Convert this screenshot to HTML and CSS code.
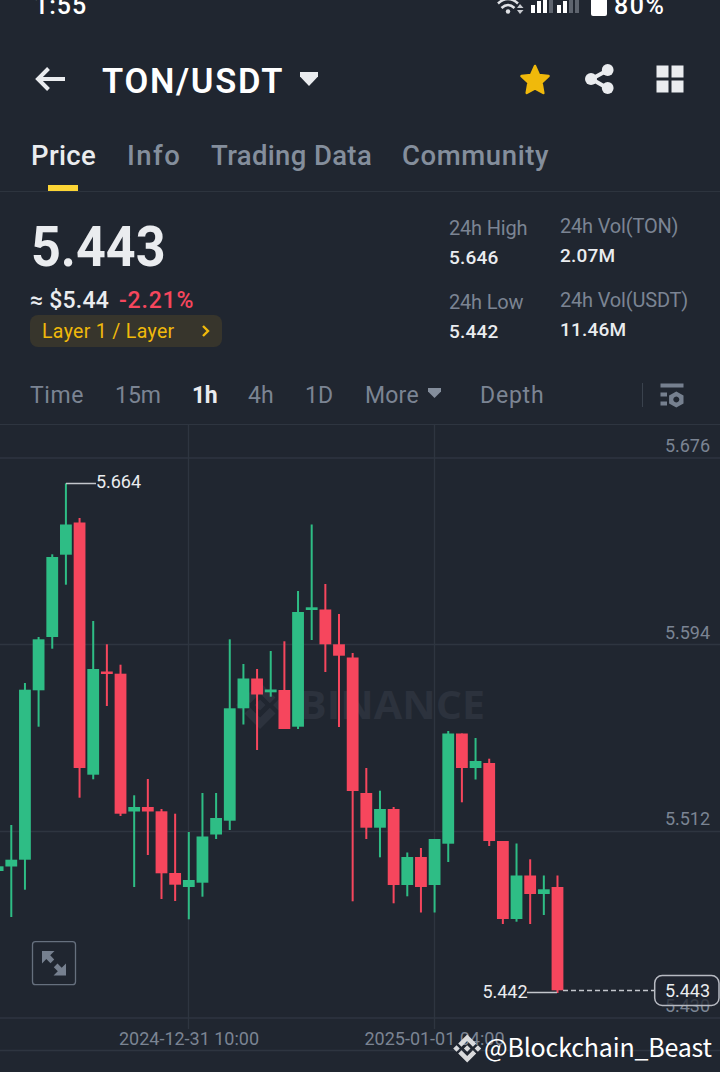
FILE: index.html
```html
<!DOCTYPE html>
<html lang="en">
<head>
<meta charset="utf-8">
<title>TON/USDT</title>
<link rel="stylesheet" href="styles.css">
</head>
<body>
<div class="status">
  <span class="clock">1:55</span>
  <svg class="status-icons" width="110" height="20" viewBox="0 0 110 20">
    <g fill="none" stroke="#dfe1e5" stroke-width="2.6">
      <path d="M1 3.5Q11-5.5 21 3.5"/><path d="M4.500 8Q11 2 17.500 8"/>
    </g>
    <circle cx="11" cy="11.500" r="2.200" fill="#dfe1e5"/>
    <path d="M20 8l3-4 3.500 4zM20 10l3 4 3.500-4z" fill="#c9ccd1"/>
    <path fill="#fff" d="M34 5h4v8h-4zM40 1h4v12h-4zM46 0h4v13h-4zM60 5h4v8h-4zM66 1h4v12h-4z"/>
    <path fill="#5e646e" d="M52 0h4v13h-4zM72 0h4v13h-4zM78 0h4v13h-4z"/>
    <path fill="#fff" d="M94 0h16v14q0 2-2 2H96q-2 0-2-2z"/>
  </svg>
  <span class="battery">80%</span>
</div>

<header class="header">
  <svg class="back" width="32" height="26" viewBox="0 0 32 26"><path d="M31 13H4M14.500 2.500L4 13l10.500 10.500" fill="none" stroke="#eaecef" stroke-width="4"/></svg>
  <h1 class="pair">TON/USDT</h1>
  <svg class="pair-caret" width="18" height="14" viewBox="0 0 18 14"><path d="M0 0h18v4.500L9 14 0 4.500z" fill="#eaecef"/></svg>
  <svg class="star" width="30" height="31" viewBox="0 0 30 31"><path d="M15 2l4 9 9.500 1-7 6.500 1.800 10.500L15 24.300 6.700 29l1.800-10.500-7-6.500 9.500-1z" fill="#f0b90b" stroke="#f0b90b" stroke-width="2.500" stroke-linejoin="round"/></svg>
  <svg class="share" width="30" height="30" viewBox="0 0 30 30"><path d="M23 6L6.500 15 23 24.500" fill="none" stroke="#eaecef" stroke-width="4"/><g fill="#eaecef"><circle cx="22.700" cy="6" r="5.900"/><circle cx="6" cy="15" r="6"/><circle cx="22.700" cy="24" r="5.900"/></g></svg>
  <svg class="grid-icon" width="28" height="28" viewBox="0 0 28 28"><path d="M.500.500h12v12h-12zM15.500.500h12v12h-12zM.500 15.500h12v12h-12zM15.500 15.500h12v12h-12z" fill="#eaecef"/></svg>
</header>

<nav class="tabs">
  <span class="tab tab-price active">Price</span>
  <span class="tab tab-info">Info</span>
  <span class="tab tab-trading">Trading Data</span>
  <span class="tab tab-community">Community</span>
</nav>

<section class="summary">
  <div class="quote">
    <div class="last">5.443</div>
    <div class="fiat"><span class="usd">≈ $5.44</span><span class="change">-2.21%</span></div>
    <div class="tag"><span>Layer 1 / Layer</span><svg width="8" height="12" viewBox="0 0 8 12"><path d="M1 1l5 5-5 5" fill="none" stroke="#f0b90b" stroke-width="2.400"/></svg></div>
  </div>
  <dl class="stats stats-range">
    <dt>24h High</dt><dd>5.646</dd>
    <dt class="low">24h Low</dt><dd>5.442</dd>
  </dl>
  <dl class="stats stats-volume">
    <dt>24h Vol(TON)</dt><dd>2.07M</dd>
    <dt>24h Vol(USDT)</dt><dd>11.46M</dd>
  </dl>
</section>

<nav class="frames">
  <span class="frame f-time">Time</span>
  <span class="frame f-15m">15m</span>
  <span class="frame f-1h active">1h</span>
  <span class="frame f-4h">4h</span>
  <span class="frame f-1d">1D</span>
  <span class="frame f-more">More</span>
  <svg class="more-caret" width="13" height="10" viewBox="0 0 13 10"><path d="M0 0h13v3.500L6.500 10 0 3.500z" fill="#848e9c"/></svg>
  <span class="frame f-depth">Depth</span>
  <i class="divider"></i>
  <svg class="settings" width="24" height="25" viewBox="0 0 24 25"><path fill="#76808f" fill-rule="evenodd" d="M.500.500h23v4H.500zM.500 9.500h6.500v4H.500zM.500 18.500h6.500v4H.500zM16.300 8.500l7.200 4v8l-7.200 4-7.200-4v-8zM16.300 13.500a3 3 0 1 0 .01 0z"/></svg>
</nav>

<main class="chart">
  <svg class="plot" width="720" height="648" viewBox="0 424 720 648">
    <g class="grid">
      <path class="rule-wide" d="M0 424H720"/>
      <path d="M0 458H720M0 644.500H720M0 831.500H720M0 1018H720M0 1050.500H720M188.500 425V1029M434.500 425V1029"/>
    </g>
    <g class="brand">
      <path d="M236 705l5.500-5.500 5.500 5.500-5.500 5.500zM254.500 705l5.500-5.500 5.500 5.500-5.500 5.500zM273 705l5.500-5.500 5.500 5.500-5.500 5.500zM244.500 697.500L260 682l15.500 15.500-5.700 5.700-9.800-9.800-9.800 9.800zM244.500 713.500l5.700-5.700 9.800 9.800 9.800-9.800 5.700 5.700L260 729z"/>
      <text x="299" y="719" textLength="186" lengthAdjust="spacingAndGlyphs">BINANCE</text>
    </g>
    <g id="candles"></g>
    <g class="marker">
      <path d="M66 483.500H96M527 992.500H557"/>
      <path d="M563 990.500H655" stroke-dasharray="5 3"/>
      <text x="96" y="488" textLength="45">5.664</text>
      <text x="482.500" y="998" textLength="45">5.442</text>
    </g>
    <g class="axis">
      <text x="665" y="452" textLength="45">5.676</text>
      <text x="665" y="639" textLength="45">5.594</text>
      <text x="665" y="825" textLength="45">5.512</text>
      <text x="665" y="1012" textLength="45">5.430</text>
      <text x="119" y="1045" textLength="140">2024-12-31 10:00</text>
      <text x="364.500" y="1045" textLength="140">2025-01-01 04:00</text>
    </g>
    <g class="current">
      <rect x="654.700" y="975.500" width="64.300" height="30" rx="7.500"/>
      <text x="665" y="997" textLength="45">5.443</text>
    </g>
    <g class="expand">
      <rect x="32.500" y="941.700" width="43" height="43" rx="3"/>
      <path d="M42 951h12.500l-4.300 4.200 4 4.300-3.700 3.700-4.200-4.200L42 963.500zM66 975.500H53.500l4.300-4.200-4-4 3.700-3.700 4.200 4.200 4.300-4.300z"/>
    </g>
    <g class="credit">
      <path d="M467.200 1034.500l9 9-3.300 3.300-5.700-5.700-5.700 5.700-3.300-3.300zM467.200 1062.500l9-9-3.300-3.300-5.700 5.700-5.700-5.700-3.300 3.300zM453.200 1048.500l3.300-3.300 3.300 3.300-3.300 3.300zM463.900 1048.500l3.300-3.300 3.300 3.300-3.300 3.300zM474.600 1048.500l3.300-3.300 3.300 3.300-3.300 3.300z"/>
      <text x="484" y="1057" textLength="228">@Blockchain_Beast</text>
    </g>
  </svg>
</main>
<script src="chart.js"></script>
</body>
</html>
```
FILE: styles.css
```css
* { box-sizing: border-box; }
body {
  margin: 0;
  width: 720px;
  height: 1072px;
  overflow: hidden;
  background: #202630;
  color: #eaecef;
  font-family: Roboto, "Liberation Sans", sans-serif;
}
svg { display: block; flex: none; }
span { white-space: nowrap; }

.status {
  display: flex;
  align-items: flex-start;
  height: 26px;
  padding-left: 34px;
  color: #fff;
  font-size: 25px;
  font-weight: 500;
  line-height: 12px;
}
.clock { width: 463px; letter-spacing: 1px; }
.status-icons { margin-right: 7px; }
.battery { letter-spacing: 1.500px; }

.header {
  display: flex;
  align-items: center;
  height: 106px;
  padding-left: 34px;
}
.pair {
  width: 183px;
  margin: 4px 15px 0 36px;
  color: #fff;
  font-size: 34.500px;
  font-weight: 600;
  line-height: 40px;
  letter-spacing: 1.700px;
  white-space: nowrap;
}
.pair-caret { margin-right: 202px; }
.star { margin-right: 35px; }
.share { margin-right: 41px; }

.tabs {
  display: flex;
  height: 60px;
  padding-left: 31px;
  border-bottom: 1px solid #2d343e;
  color: #848e9c;
  font-size: 27.500px;
  font-weight: 500;
  line-height: 47px;
}
.tab { position: relative; letter-spacing: .35px; }
.tab-price { width: 96px; }
.tab-info { width: 84px; letter-spacing: 1.500px; }
.tab-trading { width: 191px; }
.tab-community { letter-spacing: .6px; }
.tabs .active { color: #eaecef; }
.tabs .active::after {
  content: "";
  position: absolute;
  left: 17px;
  bottom: 0;
  width: 30px;
  height: 6px;
  background: #fcd535;
}

.summary { display: flex; height: 174px; padding-left: 30px; }
.quote { width: 419px; padding-top: 25px; }
.last {
  height: 60px;
  padding-left: 1px;
  font-size: 56px;
  font-weight: 700;
  line-height: 60px;
  transform: scaleX(.93);
  transform-origin: left;
}
.fiat { height: 38px; padding-top: 9px; font-size: 23px; font-weight: 500; line-height: 30px; }
.fiat span { display: inline-block; }
.usd { width: 89px; letter-spacing: .2px; }
.change { color: #f6465d; letter-spacing: .8px; }
.tag {
  display: flex;
  align-items: center;
  justify-content: space-between;
  width: 192px;
  height: 32px;
  padding: 0 12px;
  border-radius: 8px;
  background: #37352c;
  color: #f0b90b;
  font-size: 19.500px;
  letter-spacing: .33px;
}
.stats { margin: 0; width: 111px; padding-top: 22px; white-space: nowrap; }
.stats-volume { padding-top: 20px; width: 140px; }
.stats dt { height: 29px; color: #7b8493; font-size: 20px; line-height: 29px; letter-spacing: -.18px; }
.stats dd {
  height: 45px;
  margin: 0;
  font-size: 19px;
  font-weight: 500;
  line-height: 30px;
  letter-spacing: .2px;
}

.frames {
  display: flex;
  align-items: center;
  height: 58px;
  padding-left: 30px;
  color: #7b8493;
  font-size: 23px;
}
.f-time { width: 85px; letter-spacing: .6px; }
.f-15m { width: 77px; }
.f-1h { width: 56px; }
.f-4h { width: 57px; }
.f-1d { width: 60px; }
.f-more { width: 63px; letter-spacing: .2px; }
.f-depth { width: 162px; letter-spacing: .8px; }
.more-caret { margin: 0 39px 4px 0; }
.frames .active { color: #eaecef; font-weight: 700; letter-spacing: -.5px; }
.divider { width: 1px; height: 24px; margin-right: 17px; background: #3a424d; }

.plot { font-family: Roboto, "Liberation Sans", sans-serif; font-size: 18px; }
.grid path { fill: none; stroke: #2e3540; stroke-width: 1.300; }
.grid .rule-wide { stroke-width: 2; }
.brand { fill: #2c323d; }
.brand text { font: 700 39px "Open Sans", sans-serif; }
.up { fill: #2ebd85; }
.down { fill: #f6465d; }
.marker path { fill: none; stroke: #c3c6cc; stroke-width: 1.300; }
.marker text { fill: #eaecef; }
.axis text { fill: #7b8493; }
.current rect { fill: #202630; fill-opacity: .75; stroke: #b7bac2; stroke-width: 1.500; }
.current text { fill: #eaecef; }
.expand rect { fill: none; stroke: #66707e; stroke-width: 1.300; }
.expand path { fill: #76808f; }
.credit path { fill: #d9dadc; }
.credit text { fill: #fff; font: 400 25px "Noto Sans CJK SC", sans-serif; }
```
FILE: chart.js
```js
// Each row: direction, high, body top, body bottom, low.
const candles = [
  ["up", 866.3, 866.3, 871, 871],
  ["up", 825, 859.7, 866.5, 917],
  ["up", 683, 689.7, 859.7, 889.7],
  ["up", 637, 639.3, 690.3, 726.7],
  ["up", 554.3, 557, 637, 648.7],
  ["up", 483.3, 524.5, 554.7, 584.7],
  ["down", 518, 522.5, 768, 797.7],
  ["up", 621, 669, 774.7, 779.3],
  ["down", 644.3, 671.5, 674, 706],
  ["down", 664.7, 673.7, 813.7, 816],
  ["up", 795.3, 807, 811.5, 887],
  ["down", 779, 807, 811.5, 855],
  ["down", 809, 811.3, 873.3, 899],
  ["down", 813.7, 873, 884.7, 901],
  ["up", 832, 880, 887, 919.3],
  ["up", 793, 836.5, 882.7, 896.7],
  ["up", 793, 818, 834.5, 839],
  ["up", 639.3, 708.3, 820.7, 830],
  ["up", 664, 678.5, 708.3, 724.5],
  ["down", 669, 678.5, 694.5, 750],
  ["up", 651, 689.5, 692.3, 696.7],
  ["down", 641.3, 690, 729, 729],
  ["up", 591, 612, 726.7, 729],
  ["up", 524.5, 607.3, 610, 640],
  ["down", 584, 609.5, 644.3, 672],
  ["down", 614, 644.3, 655.7, 727],
  ["down", 653, 657.5, 791, 901.3],
  ["down", 768, 793, 827.7, 839],
  ["up", 790.7, 809, 827.7, 857.3],
  ["down", 807, 809, 885, 903.3],
  ["up", 852.5, 857, 885, 896.3],
  ["down", 848, 857, 887, 912.5],
  ["up", 839, 839, 885, 912.5],
  ["up", 731, 733.5, 843.7, 862],
  ["down", 733.5, 733.5, 768, 802.3],
  ["up", 738, 761, 768, 779.5],
  ["down", 758.7, 763, 841, 846],
  ["down", 841, 841, 919, 924],
  ["up", 843.5, 875.5, 919, 921.7],
  ["down", 859.3, 875.5, 894, 924],
  ["up", 875.5, 889.3, 894, 915],
  ["down", 875.5, 887, 990.3, 993]
];
const layer = document.getElementById("candles");
function bar(kind, x, y, width, height) {
  const r = document.createElementNS("http://www.w3.org/2000/svg", "rect");
  r.setAttribute("class", kind);
  r.setAttribute("x", x);
  r.setAttribute("y", y);
  r.setAttribute("width", width);
  r.setAttribute("height", height);
  layer.appendChild(r);
}
candles.forEach(([kind, high, top, bottom, low], i) => {
  const x = -2.37 + i * 13.655;
  bar(kind, x - 1, high, 2, low - high);
  bar(kind, x - 5.9, top, 11.8, bottom - top);
});
```
